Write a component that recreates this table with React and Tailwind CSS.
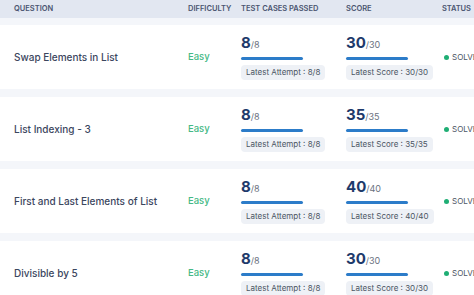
import React from "react";

const ROWS = [
  { title: "Swap Elements in List", passed: 8, total: 8, score: 30, max: 30 },
  { title: "List Indexing - 3", passed: 8, total: 8, score: 35, max: 35 },
  { title: "First and Last Elements of List", passed: 8, total: 8, score: 40, max: 40 },
  { title: "Divisible by 5", passed: 8, total: 8, score: 30, max: 30 },
];

const Metric = ({ value, total, label }) => (
  <div className="flex flex-col">
    <div className="flex items-baseline leading-[18px]">
      <span className="text-[15px] font-bold text-[#1e3a6b]">{value}</span>
      <span className="text-[9px] text-[#6b7280]">/{total}</span>
    </div>
    <div className="mt-[3px] h-[3px] w-[62px] rounded-full bg-[#2c7cc9]" />
    <div className="mt-[5px] self-start rounded-[4px] bg-[#eef1f6] px-[5px] leading-[15px] text-[8px] text-[#4b5563]">
      {label} : {value}/{total}
    </div>
  </div>
);

const App = () => {
  return (
    <div
      className="h-[295px] w-[474px] overflow-hidden bg-[#f4f6fa]"
      style={{ fontFamily: "Inter, 'Liberation Sans', sans-serif" }}
    >
      <div className="flex h-[18px] w-[520px] items-center bg-[#e2e7f1] pl-[14px] text-[7.5px] font-semibold uppercase text-[#4a5570]">
        <div className="w-[174px]">Question</div>
        <div className="w-[53px]">Difficulty</div>
        <div className="w-[105px]">Test Cases Passed</div>
        <div className="w-[96px]">Score</div>
        <div className="tracking-[-0.1px]">Status</div>
      </div>

      <div className="flex flex-col gap-[8px] pt-[7px]">
        {ROWS.map((row) => (
          <div
            key={row.title}
            className="flex h-[64px] w-[520px] items-center bg-white pl-[14px]"
          >
            <div className="w-[174px] text-[10px] font-medium text-[#3b465e]">{row.title}</div>
            <div className="w-[53px] text-[9.5px] font-medium text-[#45b985]">Easy</div>
            <div className="w-[105px]">
              <Metric value={row.passed} total={row.total} label="Latest Attempt" />
            </div>
            <div className="w-[97px]">
              <Metric value={row.score} total={row.max} label="Latest Score" />
            </div>
            <div className="flex items-center gap-[3px] pl-[1px] text-[8px] uppercase text-[#4b5563]">
              <span className="h-[5px] w-[5px] rounded-full bg-[#1fae74]" />
              Solved
            </div>
          </div>
        ))}
      </div>
    </div>
  );
};

export default App;
